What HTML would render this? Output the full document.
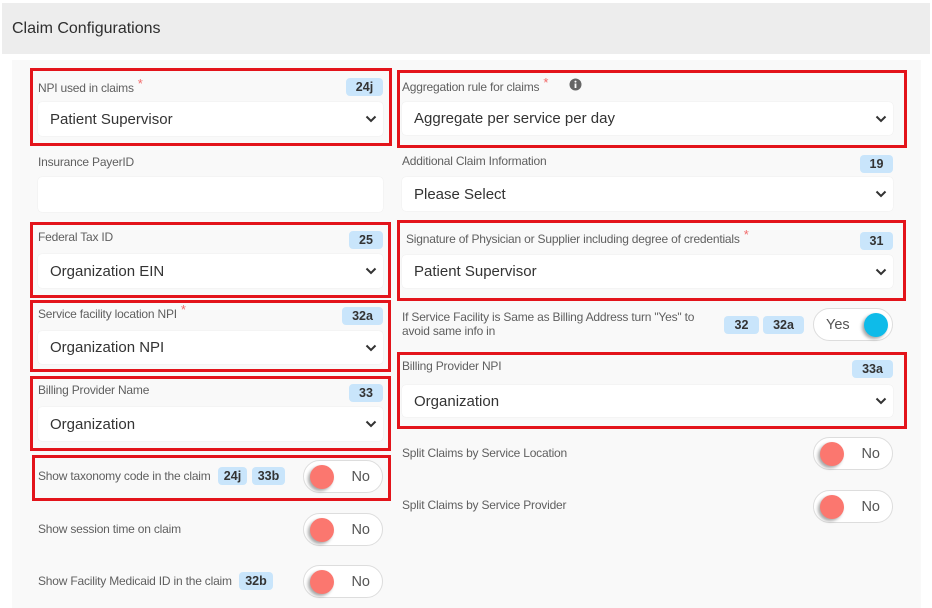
<!DOCTYPE html>
<html><head><style>
*{box-sizing:border-box;margin:0;padding:0}
body{width:932px;height:608px;background:#fff;position:relative;overflow:hidden;font-family:"Liberation Sans",sans-serif}
.a{position:absolute}
.hdr{left:2px;top:3px;width:928px;height:51px;background:#ededed}
.hdr span{position:absolute;left:10px;top:17px;font-size:16px;color:#2e2e2e;letter-spacing:0}
.panel{left:12px;top:60px;width:909px;height:548px;background:#f9f9f9}
.red{border:3px solid #e3141b}
.lbl{font-size:12px;color:#5f5f5f;white-space:nowrap;letter-spacing:-0.2px}
.star{color:#f26b6b;font-size:13px;position:relative;top:-4px;margin-left:4px}
.sel{background:#fff;border-radius:4px;box-shadow:0 0 1px rgba(0,0,0,.12);font-size:15px;color:#333;padding-left:12px;display:flex;align-items:center}
.sel svg{position:absolute;right:6px;top:50%;margin-top:-4px}
.bdg{background:#c9e5fb;border-radius:4px;font-size:12.5px;font-weight:bold;color:#333;height:18px;line-height:18px;text-align:center}
.tg{width:80px;height:33px;border-radius:17px;background:#fff;border:1px solid #ddd;font-size:14.5px;color:#555}
.tg .k{position:absolute;top:4px;width:24px;height:24px;border-radius:50%;box-shadow:-2px 2px 3px rgba(0,0,0,.35)}
.no .k{left:6px;background:#fb776f}
.no span{position:absolute;right:12px;top:8px}
.yes .k{right:4px;background:#0ebbe9}
.yes span{position:absolute;left:12px;top:8px}
</style></head><body>
<div class="a hdr"><span>Claim Configurations</span></div>
<div class="a panel"></div>

<div class="a red" style="left:30px;top:68px;width:362px;height:78px"></div>
<div class="a red" style="left:397px;top:70px;width:510px;height:78px"></div>
<div class="a red" style="left:30px;top:222px;width:361px;height:76px"></div>
<div class="a red" style="left:397px;top:220px;width:509px;height:81px"></div>
<div class="a red" style="left:30px;top:300px;width:361px;height:72px"></div>
<div class="a red" style="left:30px;top:376px;width:361px;height:75px"></div>
<div class="a red" style="left:397px;top:352px;width:510px;height:77px"></div>
<div class="a red" style="left:32px;top:455px;width:359px;height:46px"></div>

<div class="a lbl" style="left:38px;top:80px">NPI used in claims<span class="star">*</span></div>
<div class="a bdg" style="left:346px;top:78px;width:37px">24j</div>
<div class="a sel" style="left:38px;top:102px;width:345px;height:34px">Patient Supervisor<svg width="12" height="8" viewBox="0 0 12 8"><path d="M1.5 1.5L6 6L10.5 1.5" stroke="#333" stroke-width="2" fill="none"/></svg></div>

<div class="a lbl" style="left:38px;top:155px">Insurance PayerID</div>
<div class="a sel" style="left:38px;top:177px;width:345px;height:35px"></div>

<div class="a lbl" style="left:38px;top:230px">Federal Tax ID</div>
<div class="a bdg" style="left:349px;top:231px;width:34px">25</div>
<div class="a sel" style="left:38px;top:254px;width:345px;height:34px">Organization EIN<svg width="12" height="8" viewBox="0 0 12 8"><path d="M1.5 1.5L6 6L10.5 1.5" stroke="#333" stroke-width="2" fill="none"/></svg></div>

<div class="a lbl" style="left:38px;top:306px">Service facility location NPI<span class="star">*</span></div>
<div class="a bdg" style="left:342px;top:307px;width:41px">32a</div>
<div class="a sel" style="left:38px;top:331px;width:345px;height:33px">Organization NPI<svg width="12" height="8" viewBox="0 0 12 8"><path d="M1.5 1.5L6 6L10.5 1.5" stroke="#333" stroke-width="2" fill="none"/></svg></div>

<div class="a lbl" style="left:38px;top:383px">Billing Provider Name</div>
<div class="a bdg" style="left:349px;top:384px;width:34px">33</div>
<div class="a sel" style="left:38px;top:407px;width:345px;height:34px">Organization<svg width="12" height="8" viewBox="0 0 12 8"><path d="M1.5 1.5L6 6L10.5 1.5" stroke="#333" stroke-width="2" fill="none"/></svg></div>

<div class="a lbl" style="left:38px;top:469px">Show taxonomy code in the claim</div>
<div class="a bdg" style="left:218px;top:467px;width:29px">24j</div>
<div class="a bdg" style="left:252px;top:467px;width:33px">33b</div>
<div class="a tg no" style="left:303px;top:460px"><div class="k"></div><span>No</span></div>

<div class="a lbl" style="left:38px;top:522px">Show session time on claim</div>
<div class="a tg no" style="left:303px;top:513px"><div class="k"></div><span>No</span></div>

<div class="a lbl" style="left:38px;top:574px">Show Facility Medicaid ID in the claim</div>
<div class="a bdg" style="left:239px;top:572px;width:34px">32b</div>
<div class="a tg no" style="left:303px;top:565px"><div class="k"></div><span>No</span></div>

<div class="a lbl" style="left:402px;top:79px">Aggregation rule for claims<span class="star">*</span></div>
<svg class="a" style="left:569px;top:78px" width="13" height="13" viewBox="0 0 13 13"><circle cx="6.5" cy="6.5" r="6" fill="#666"/><rect x="5.6" y="5.5" width="1.8" height="4.5" fill="#fff"/><circle cx="6.5" cy="3.6" r="1" fill="#fff"/></svg>
<div class="a sel" style="left:402px;top:102px;width:491px;height:33px">Aggregate per service per day<svg width="12" height="8" viewBox="0 0 12 8"><path d="M1.5 1.5L6 6L10.5 1.5" stroke="#333" stroke-width="2" fill="none"/></svg></div>

<div class="a lbl" style="left:402px;top:154px">Additional Claim Information</div>
<div class="a bdg" style="left:860px;top:155px;width:33px">19</div>
<div class="a sel" style="left:402px;top:177px;width:491px;height:34px">Please Select<svg width="12" height="8" viewBox="0 0 12 8"><path d="M1.5 1.5L6 6L10.5 1.5" stroke="#333" stroke-width="2" fill="none"/></svg></div>

<div class="a lbl" style="left:406px;top:231px">Signature of Physician or Supplier including degree of credentials<span class="star">*</span></div>
<div class="a bdg" style="left:860px;top:232px;width:33px">31</div>
<div class="a sel" style="left:402px;top:255px;width:491px;height:33px">Patient Supervisor<svg width="12" height="8" viewBox="0 0 12 8"><path d="M1.5 1.5L6 6L10.5 1.5" stroke="#333" stroke-width="2" fill="none"/></svg></div>

<div class="a lbl" style="left:402px;top:310px;line-height:14px">If Service Facility is Same as Billing Address turn "Yes" to<br>avoid same info in</div>
<div class="a bdg" style="left:724px;top:316px;width:35px">32</div>
<div class="a bdg" style="left:763px;top:316px;width:41px">32a</div>
<div class="a tg yes" style="left:813px;top:308px"><span>Yes</span><div class="k"></div></div>

<div class="a lbl" style="left:402px;top:359px">Billing Provider NPI</div>
<div class="a bdg" style="left:852px;top:360px;width:41px">33a</div>
<div class="a sel" style="left:402px;top:385px;width:491px;height:32px">Organization<svg width="12" height="8" viewBox="0 0 12 8"><path d="M1.5 1.5L6 6L10.5 1.5" stroke="#333" stroke-width="2" fill="none"/></svg></div>

<div class="a lbl" style="left:402px;top:446px">Split Claims by Service Location</div>
<div class="a tg no" style="left:813px;top:437px"><div class="k"></div><span>No</span></div>

<div class="a lbl" style="left:402px;top:498px">Split Claims by Service Provider</div>
<div class="a tg no" style="left:813px;top:490px"><div class="k"></div><span>No</span></div>
</body></html>
